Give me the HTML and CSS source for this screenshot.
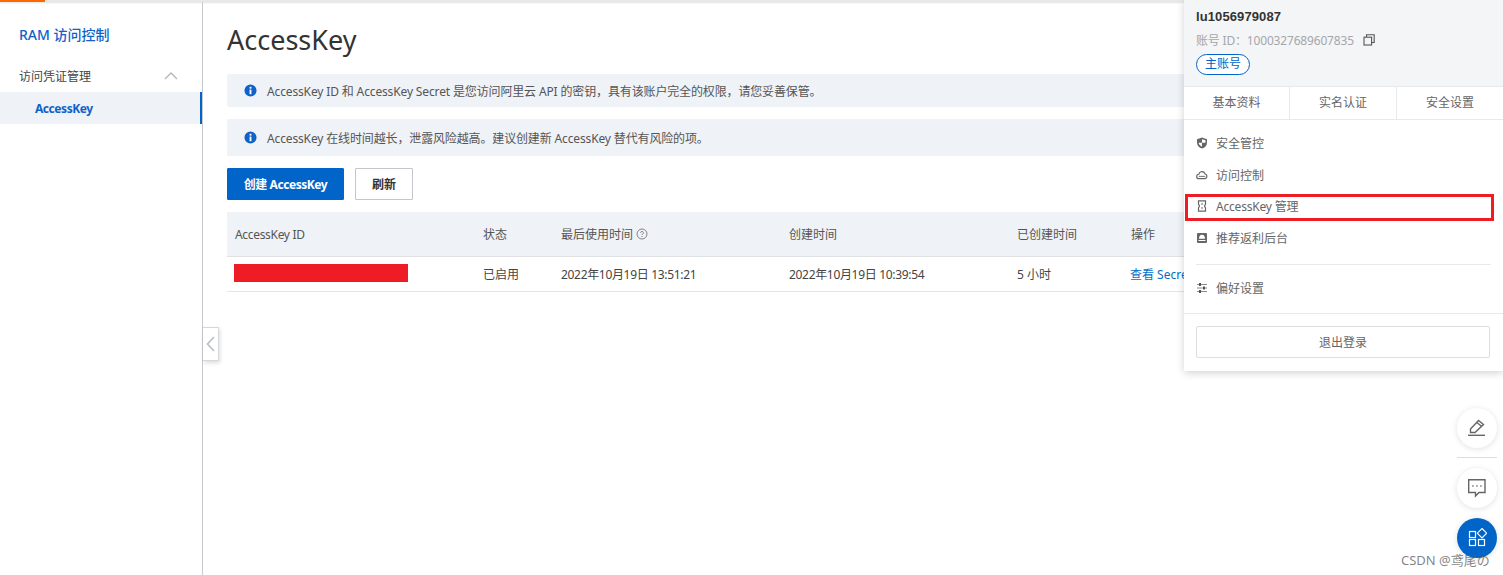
FILE: index.html
```html
<!DOCTYPE html>
<html lang="zh-CN">
<head>
    <meta charset="UTF-8">
    <title>AccessKey</title>
    <link rel="stylesheet" href="styles.css">
</head>
<body>
    <div class="topbar"><div class="topbar-progress"></div></div>

    <div class="layout">
        <aside class="sidebar">
            <div class="side-title">RAM 访问控制</div>
            <div class="side-group">
                <span>访问凭证管理</span>
                <svg class="side-caret" width="14" height="8" viewBox="0 0 14 8"><path d="M1 7l6-6 6 6" fill="none" stroke="#b5b5b5" stroke-width="1.3"/></svg>
            </div>
            <div class="side-item">AccessKey</div>
        </aside>

        <main class="content">
            <h1 class="page-title">AccessKey</h1>

            <div class="alert alert-first">
                <svg class="info-icon" viewBox="0 0 14 14"><circle cx="7" cy="7" r="6.5" fill="#0f62c9"/><rect x="6" y="3" width="2" height="2" fill="#fff"/><rect x="6" y="6" width="2" height="5" fill="#fff"/></svg>
                <span>AccessKey ID 和 AccessKey Secret 是您访问阿里云 API 的密钥，具有该账户完全的权限，请您妥善保管。</span>
            </div>
            <div class="alert alert-second">
                <svg class="info-icon" viewBox="0 0 14 14"><circle cx="7" cy="7" r="6.5" fill="#0f62c9"/><rect x="6" y="3" width="2" height="2" fill="#fff"/><rect x="6" y="6" width="2" height="5" fill="#fff"/></svg>
                <span>AccessKey 在线时间越长，泄露风险越高。建议创建新 AccessKey 替代有风险的项。</span>
            </div>

            <div class="actions">
                <button class="btn btn-primary">创建 AccessKey</button>
                <button class="btn btn-plain">刷新</button>
            </div>

            <div class="table">
                <div class="table-row table-head">
                    <div class="latin-cell">AccessKey ID</div>
                    <div>状态</div>
                    <div class="with-help">最后使用时间
                        <svg width="12" height="12" viewBox="0 0 12 12"><circle cx="6" cy="6" r="5" fill="none" stroke="#777" stroke-width="0.9"/><path d="M4.6 4.8a1.4 1.4 0 1 1 2.1 1.2c-.5.3-.7.5-.7 1" fill="none" stroke="#777" stroke-width="0.9"/><rect x="5.5" y="8" width="1" height="1" fill="#777"/></svg>
                    </div>
                    <div>创建时间</div>
                    <div>已创建时间</div>
                    <div>操作</div>
                </div>
                <div class="table-row table-body">
                    <div><div class="redacted"></div></div>
                    <div>已启用</div>
                    <div class="latin-cell">2022年10月19日 13:51:21</div>
                    <div class="latin-cell">2022年10月19日 10:39:54</div>
                    <div>5 小时</div>
                    <div class="row-link">查看 Secret</div>
                </div>
            </div>
        </main>
    </div>

    <div class="collapse-handle">
        <svg width="9" height="16" viewBox="0 0 9 16"><path d="M8 1L1.5 8 8 15" fill="none" stroke="#b9bdc4" stroke-width="1.6"/></svg>
    </div>

    <!-- account dropdown -->
    <div class="account-panel">
        <div class="account-head">
            <div class="account-name">lu1056979087</div>
            <div class="account-id">
                <span>账号 ID：1000327689607835</span>
                <svg width="12" height="12" viewBox="0 0 12 12"><path d="M3.5 3V.8h7.7v7.7H8.8" fill="none" stroke="#555" stroke-width="1.1"/><rect x="1" y="3.2" width="7.6" height="7.8" fill="none" stroke="#555" stroke-width="1.1"/></svg>
            </div>
            <span class="account-badge">主账号</span>
        </div>

        <div class="account-tabs">
            <div>基本资料</div>
            <div>实名认证</div>
            <div>安全设置</div>
        </div>

        <ul class="account-menu">
            <li>
                <svg viewBox="0 0 12 12"><path d="M6 .5l5 1.700v3.600c0 3-2.200 5-5 5.700-2.800-.7-5-2.700-5-5.700V2.200z" fill="#666"/><path d="M6 2.200v3.600H2.600c.2 1.800 1.600 3.100 3.400 3.800V5.800h3.500V3.200z" fill="#fff"/></svg>
                安全管控
            </li>
            <li>
                <svg viewBox="0 0 13 12"><path d="M3.300 10a2.400 2.400 0 0 1-.3-4.800 3.500 3.500 0 0 1 6.700-.6 2.800 2.800 0 0 1 .1 5.400z" fill="none" stroke="#666" stroke-width="1.300"/><path d="M3 7.500h7" stroke="#666" stroke-width="1"/></svg>
                访问控制
            </li>
            <li class="is-marked">
                <svg viewBox="0 0 12 12"><path d="M2.500 .8h7v3.200l-1 2 1 2v3.200h-7V8l1-2-1-2z" fill="none" stroke="#666" stroke-width="1.200"/><path d="M5 4h2M5 8h2" stroke="#666" stroke-width="1"/></svg>
                AccessKey 管理
            </li>
            <li>
                <svg viewBox="0 0 12 12"><rect x="1" y="1" width="10" height="10" rx="1" fill="#666"/><path d="M3 6.800C3 4 4.300 2.800 6 2.800S9 4 9 6.800z" fill="#fff"/><rect x="2.500" y="8" width="7" height="1" fill="#fff"/></svg>
                推荐返利后台
            </li>
            <li class="menu-divider"></li>
            <li class="menu-prefs">
                <svg viewBox="0 0 12 12"><path d="M1 2.500h10M1 6h10M1 9.500h10" stroke="#888" stroke-width="1"/><rect x="3" y="1" width="2" height="3" fill="#555"/><rect x="7" y="4.500" width="2" height="3" fill="#555"/><rect x="3" y="8" width="2" height="3" fill="#555"/></svg>
                偏好设置
            </li>
        </ul>

        <div class="account-foot">
            <button class="logout-btn">退出登录</button>
        </div>
    </div>

    <div class="float-btn float-edit">
        <svg width="20" height="20" viewBox="0 0 20 20"><path d="M3.500 14.500V11L11.500 2.500l5 4-8.500 8z" fill="none" stroke="#666" stroke-width="1.400"/><path d="M9.800 4.500l5 4" stroke="#666" stroke-width="1.400"/><path d="M1 17.300h17" stroke="#666" stroke-width="1.400"/></svg>
    </div>
    <div class="float-sep"></div>
    <div class="float-btn float-chat">
        <svg width="20" height="20" viewBox="0 0 20 20"><path d="M1.700 1.700H18V14.500H12L8.500 18V14.500H1.700z" fill="none" stroke="#666" stroke-width="1.400"/><rect x="5.200" y="7.300" width="1.400" height="1.400" fill="#666"/><rect x="9.200" y="7.300" width="1.400" height="1.400" fill="#666"/><rect x="13.200" y="7.300" width="1.400" height="1.400" fill="#666"/></svg>
    </div>
    <div class="float-btn float-apps">
        <svg width="20" height="20" viewBox="0 0 20 20"><rect x="2.500" y="3.500" width="6" height="6" fill="none" stroke="#fff" stroke-width="1.200"/><path d="M15 .5l4.700 4.700-4.700 4.700-4.700-4.700z" fill="none" stroke="#fff" stroke-width="1.100"/><rect x="2.500" y="11.500" width="6" height="6" fill="none" stroke="#fff" stroke-width="1.200"/><rect x="11.500" y="11.500" width="6" height="6" fill="none" stroke="#fff" stroke-width="1.200"/></svg>
    </div>
    <div class="watermark">CSDN @鸢尾の</div>
</body>
</html>
```

FILE: styles.css
```css
* {
    margin: 0;
    padding: 0;
    box-sizing: border-box;
}

html, body {
    height: 100%;
    overflow: hidden;
}

body {
    position: relative;
    font-family: "Noto Sans", "Noto Sans CJK SC", sans-serif;
    font-size: 12px;
    color: #333;
    background: #fff;
}

.topbar {
    height: 2px;
    background: #e8e8e8;
    box-shadow: 0 1px 2px rgba(0, 0, 0, 0.12);
}

.topbar-progress {
    width: 45px;
    height: 2px;
    background: #ff6a00;
}

.layout {
    display: flex;
    height: 573px;
}

.sidebar {
    width: 203px;
    flex-shrink: 0;
    border-right: 1px solid #c6c9ce;
}

.side-title {
    height: 33px;
    margin-top: 16px;
    padding-left: 19px;
    font-size: 14px;
    font-weight: 500;
    line-height: 33px;
    color: #0f62c9;
}

.side-group {
    display: flex;
    align-items: center;
    justify-content: space-between;
    height: 41px;
    padding: 9px 24px 0 19px;
    color: #444;
}

.side-item {
    height: 32px;
    padding-left: 35px;
    line-height: 34px;
    font-weight: 700;
    letter-spacing: -0.45px;
    color: #0f62c9;
    background: #eff2f7;
    border-right: 2px solid #0064c8;
}

.content {
    flex: 1;
    padding: 0 0 0 24px;
}

.page-title {
    height: 72px;
    padding-top: 16px;
    font-size: 27px;
    font-weight: 400;
    line-height: 44px;
    color: #333;
}

.alert {
    display: flex;
    align-items: center;
    gap: 10px;
    padding-left: 17px;
    background: #eff2f7;
    border-radius: 2px;
    color: #555;
    letter-spacing: -0.14px;
}

.alert-first {
    height: 33px;
    margin-bottom: 12px;
}

.alert-second {
    height: 37px;
    margin-bottom: 12px;
}

.info-icon {
    width: 13px;
    height: 13px;
    flex-shrink: 0;
}

.actions {
    display: flex;
    gap: 11px;
    margin-bottom: 12px;
}

.btn {
    height: 32px;
    font-family: inherit;
    font-size: 12px;
    font-weight: 700;
    border-radius: 1px;
}

.btn-primary {
    width: 117px;
    color: #fff;
    background: #0064c8;
    border: 1px solid #0064c8;
    letter-spacing: -0.45px;
}

.btn-plain {
    width: 58px;
    color: #333;
    background: #fff;
    border: 1px solid #c4c6cc;
}

.table-row {
    display: grid;
    grid-template-columns: 248px 78px 228px 228px 114px 1fr;
    align-items: center;
    padding-left: 8px;
}

.table-head {
    height: 45px;
    color: #555;
    background: #eff2f7;
    border-bottom: 1px solid #dfe1e5;
}

.latin-cell {
    letter-spacing: -0.32px;
}

.with-help {
    display: flex;
    align-items: center;
    gap: 3px;
}

.table-body {
    height: 35px;
    color: #444;
    border-bottom: 1px solid #e3e4e7;
}

.redacted {
    width: 174px;
    height: 18px;
    margin: -2px 0 0 -1px;
    background: #ee1c25;
}

.row-link {
    margin-left: -1px;
    color: #0070cc;
    white-space: nowrap;
}

.collapse-handle {
    position: absolute;
    left: 203px;
    top: 327px;
    display: flex;
    align-items: center;
    justify-content: center;
    width: 16px;
    height: 34px;
    background: #fff;
    border: 1px solid #d5d7db;
    border-left: none;
    box-shadow: 1px 2px 4px rgba(0, 0, 0, 0.14);
}

.account-panel {
    position: absolute;
    top: 0;
    left: 1184px;
    width: 319px;
    height: 371px;
    background: #fff;
    box-shadow: 0 2px 8px rgba(0, 0, 0, 0.18);
    color: #666;
}

.account-head {
    height: 87px;
    padding: 8px 12px 0;
    background: #f4f5f7;
    border-bottom: 1px solid #e8e9eb;
}

.account-name {
    height: 17px;
    font-family: "Liberation Sans", sans-serif;
    font-size: 13px;
    font-weight: 700;
    line-height: 17px;
    letter-spacing: 0.1px;
    color: #333;
}

.account-id {
    display: flex;
    align-items: center;
    gap: 9px;
    height: 22px;
    margin-top: 4px;
    color: #a5a7aa;
    letter-spacing: -0.18px;
}

.account-badge {
    display: block;
    width: 54px;
    height: 21px;
    margin-top: 3px;
    border: 1px solid #0064c8;
    border-radius: 11px;
    text-align: center;
    line-height: 18px;
    color: #0064c8;
    background: #fff;
}

.account-tabs {
    display: grid;
    grid-template-columns: 105px 107px 107px;
    height: 33px;
    border-bottom: 1px solid #e8e9eb;
}

.account-tabs div {
    text-align: center;
    line-height: 31px;
}

.account-tabs div + div {
    border-left: 1px solid #e8e9eb;
}

.account-menu {
    list-style: none;
    padding: 7px 12px 0;
}

.account-menu li {
    display: flex;
    align-items: center;
    gap: 8px;
    height: 31.7px;
    position: relative;
}

.account-menu svg {
    width: 12px;
    height: 12px;
}

.account-menu .menu-divider {
    height: 1px;
    margin: 10px 0 7px;
    background: #e8e9eb;
}

.is-marked {
    letter-spacing: -0.2px;
}

.is-marked::after {
    content: "";
    position: absolute;
    left: -11px;
    right: -3px;
    top: 3.600px;
    height: 27px;
    box-sizing: border-box;
    border: 3px solid #ee1c25;
}

.account-foot {
    margin-top: 10px;
    padding: 12px 12px 0;
    border-top: 1px solid #e8e9eb;
}

.logout-btn {
    width: 294px;
    height: 32px;
    font-family: inherit;
    font-size: 12px;
    color: #666;
    background: #fff;
    border: 1px solid #dcdde0;
    border-radius: 2px;
}

.float-btn {
    position: absolute;
    left: 1457px;
    display: flex;
    align-items: center;
    justify-content: center;
    width: 40px;
    height: 40px;
    border-radius: 50%;
    background: #fff;
    box-shadow: 0 1px 6px rgba(0, 0, 0, 0.12);
}

.float-edit {
    top: 408px;
}

.float-chat {
    top: 468px;
}

.float-apps {
    top: 518px;
    background: #0064c8;
}

.float-sep {
    position: absolute;
    top: 457px;
    left: 1457px;
    width: 40px;
    height: 1px;
    background: #dcdce2;
}

.watermark {
    position: absolute;
    top: 552px;
    left: 1401px;
    font-size: 13px;
    line-height: 16px;
    color: rgba(90, 90, 90, 0.75);
    white-space: nowrap;
}
```
